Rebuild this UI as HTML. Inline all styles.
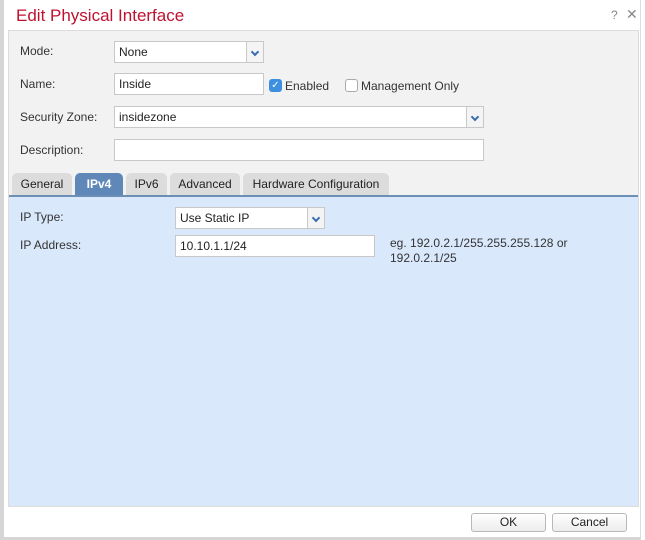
<!DOCTYPE html>
<html><head><style>
*{box-sizing:border-box;margin:0;padding:0}
body{width:645px;height:540px;background:#fff;font-family:"Liberation Sans",sans-serif;font-size:12px;color:#333;position:relative;overflow:hidden}
.a{position:absolute}
.inp{position:absolute;background:#fff;border:1px solid #c8c8c8;height:22px;padding-left:4px;line-height:20px;font-size:12px;color:#222}
.dd{position:absolute;right:0;top:0;width:17px;height:20px;border-left:1px solid #c8c8c8;background:#f4f4f4}
.dd:after{content:"";position:absolute;left:5px;top:7px;width:4px;height:4px;border-right:2px solid #3a6db0;border-bottom:2px solid #3a6db0;transform:rotate(45deg)}
.lbl{position:absolute;font-size:12px;color:#333}
.tab{position:absolute;top:173px;height:22px;background:#dcdcdc;border-radius:5px 5px 0 0;text-align:center;line-height:22px;font-size:12px;color:#222}
.btn{position:absolute;top:513px;height:19px;border:1px solid #b8b8b8;border-radius:3px;background:linear-gradient(#fff,#ececec);text-align:center;line-height:17px;font-size:12px;color:#222}
</style></head><body>
<div class="a" style="left:0;top:0;width:4px;height:540px;background:#d6d6d6"></div>
<div class="a" style="left:0;top:537px;width:645px;height:3px;background:#d6d6d6"></div>
<div class="a" style="left:640px;top:0;width:5px;height:540px;background:#fff;border-left:1px solid #ddd"></div>
<div class="a" style="left:16px;top:6px;font-size:17px;color:#c0112f">Edit Physical Interface</div>
<div class="a" style="left:611px;top:8px;font-size:12px;color:#888">?</div>
<div class="a" style="left:626px;top:6px;font-size:14px;color:#888">✕</div>
<div class="a" style="left:8px;top:30px;width:631px;height:477px;background:#f2f2f2;border:1px solid #dcdcdc"></div>
<div class="lbl" style="left:20px;top:44px">Mode:</div>
<div class="inp" style="left:114px;top:41px;width:150px">None<div class="dd"></div></div>
<div class="lbl" style="left:20px;top:77px">Name:</div>
<div class="inp" style="left:114px;top:73px;width:150px">Inside</div>
<div class="a" style="left:269px;top:79px;width:13px;height:13px;border-radius:3px;background:#3d8fe0;color:#fff;font-size:10px;line-height:13px;text-align:center">✓</div>
<div class="lbl" style="left:285px;top:79px">Enabled</div>
<div class="a" style="left:345px;top:79px;width:13px;height:13px;border-radius:3px;background:#fff;border:1px solid #aaa"></div>
<div class="lbl" style="left:361px;top:79px">Management Only</div>
<div class="lbl" style="left:20px;top:110px">Security Zone:</div>
<div class="inp" style="left:114px;top:106px;width:370px">insidezone<div class="dd"></div></div>
<div class="lbl" style="left:20px;top:143px">Description:</div>
<div class="inp" style="left:114px;top:139px;width:370px"></div>
<div class="tab" style="left:12px;width:60px">General</div>
<div class="tab" style="left:75px;width:48px;background:#5f88b9;color:#fff;font-weight:bold">IPv4</div>
<div class="tab" style="left:126px;width:41px">IPv6</div>
<div class="tab" style="left:170px;width:70px">Advanced</div>
<div class="tab" style="left:243px;width:146px">Hardware Configuration</div>
<div class="a" style="left:9px;top:195px;width:629px;height:2px;background:#6d8fb5"></div>
<div class="a" style="left:9px;top:197px;width:629px;height:309px;background:#d9e8fb"></div>
<div class="lbl" style="left:20px;top:210px">IP Type:</div>
<div class="inp" style="left:175px;top:207px;width:150px">Use Static IP<div class="dd"></div></div>
<div class="lbl" style="left:20px;top:238px">IP Address:</div>
<div class="inp" style="left:175px;top:235px;width:200px">10.10.1.1/24</div>
<div class="lbl" style="left:390px;top:236px;line-height:15px">eg. 192.0.2.1/255.255.255.128 or<br>192.0.2.1/25</div>
<div class="btn" style="left:471px;width:75px">OK</div>
<div class="btn" style="left:552px;width:75px">Cancel</div>
</body></html>
